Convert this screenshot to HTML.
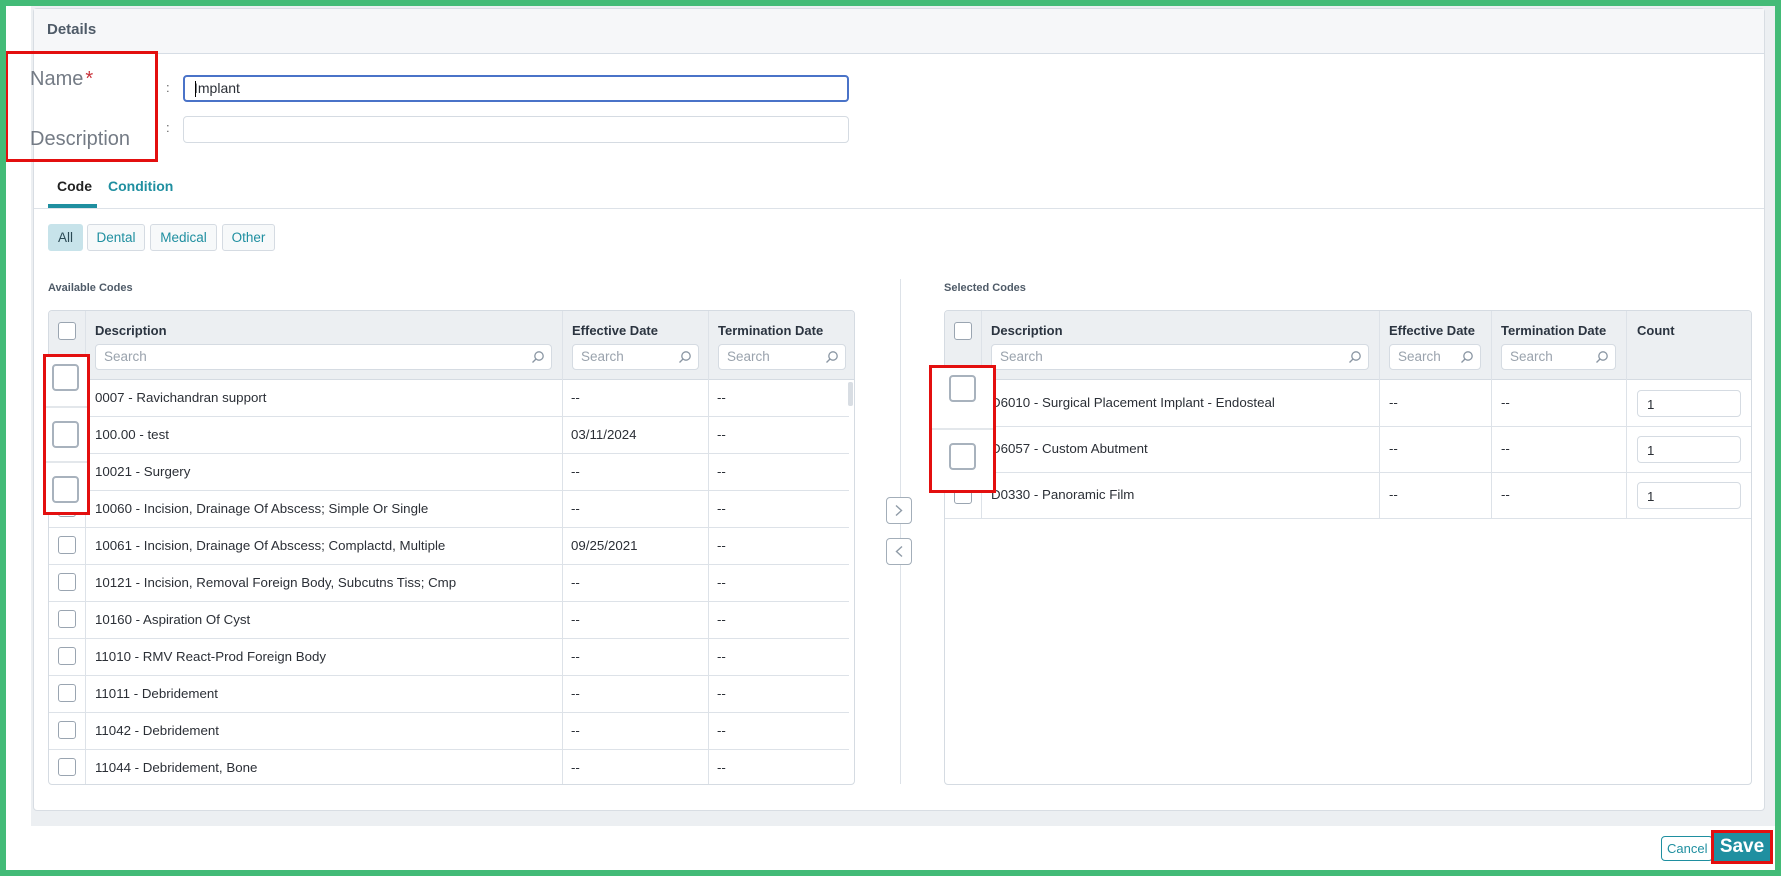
<!DOCTYPE html>
<html><head><meta charset="utf-8">
<style>
*{box-sizing:border-box;margin:0;padding:0}
body{width:1781px;height:876px;position:relative;overflow:hidden;background:#fff;font-family:"Liberation Sans",Arial,sans-serif;color:#2b2f36}
.a{position:absolute}
.frame{left:0;top:0;width:1781px;height:876px;border:6px solid #43bb77}
.gray{left:31px;top:6px;width:1744px;height:820px;background:#eceff2}
.panel{left:33px;top:8px;width:1732px;height:803px;background:#fff;border:1px solid #d8dde3;border-radius:4px}
.hdr{left:34px;top:9px;width:1730px;height:45px;background:#f6f7f9;border-bottom:1px solid #d6dde5}
.lbl{color:#747b85;font-size:20px}
.inp{border:1px solid #d5dbe2;border-radius:4px;background:#fff}
.red{border:3px solid #e30f0f}
.btn{top:224px;height:27px;border:1px solid #d5dbe2;border-radius:3px;background:#f7f9fa;color:#1f8fa0;font-size:13.5px;text-align:center;line-height:25px}
.tbl{border:1px solid #d5dbe2;border-radius:4px;background:#fff;overflow:hidden}
.th{background:#eceff2;font-weight:bold;font-size:13px;color:#2b3440}
.cb{width:18px;height:18px;border:1.5px solid #9aa5b1;border-radius:3px;background:#fff}
.cbb{width:27px;height:27px;border:2px solid #a8b2bd;border-radius:4px;background:#fff}
.srch{height:26px;border:1px solid #d5dbe2;border-radius:4px;background:#fff;color:#9aa3ad;font-size:13.5px;line-height:24px;padding-left:8px}
.srch svg{position:absolute;right:6px;top:5px}
.row{font-size:13.3px;color:#2b2f36}
.vl{background:#dde2e8;width:1px}
.hl{background:#dde2e8;height:1px}
</style></head><body>
<div class="a gray"></div>
<div class="a panel"></div>
<div class="a hdr"></div>
<div class="a" style="left:47px;top:21px;font-size:15px;font-weight:bold;color:#4f5b68">Details</div>

<div class="a lbl" style="left:30px;top:68px">Name<span style="color:#c8323a;font-size:20px;margin-left:2px">*</span></div>
<div class="a lbl" style="left:30px;top:128px">Description</div>
<div class="a red" style="left:5px;top:51px;width:153px;height:111px"></div>
<div class="a" style="left:166px;top:80px;font-size:13px;color:#666">:</div>
<div class="a" style="left:166px;top:120px;font-size:13px;color:#666">:</div>
<div class="a" style="left:183px;top:75px;width:666px;height:27px;border:2px solid #4a73c8;border-radius:4px;font-size:14px;line-height:23px;padding-left:9px">Implant<span class="a" style="left:10px;top:4px;width:1px;height:16px;background:#000"></span></div>
<div class="a inp" style="left:183px;top:116px;width:666px;height:27px"></div>

<div class="a" style="left:57px;top:178px;font-size:14px;font-weight:bold;color:#222">Code</div>
<div class="a" style="left:108px;top:178px;font-size:14px;font-weight:bold;color:#1f8fa0">Condition</div>
<div class="a" style="left:48px;top:204px;width:49px;height:4px;background:#1f8fa0"></div>
<div class="a hl" style="left:34px;top:208px;width:1730px"></div>

<div class="a btn" style="left:48px;width:35px;background:#c7e3ea;border-color:#c7e3ea;color:#2b4a55">All</div>
<div class="a btn" style="left:87px;width:58px">Dental</div>
<div class="a btn" style="left:150px;width:67px">Medical</div>
<div class="a btn" style="left:222px;width:53px">Other</div>

<div class="a" style="left:48px;top:282px;font-size:11px;font-weight:bold;color:#4f5b68">Available Codes</div>
<div class="a" style="left:944px;top:282px;font-size:11px;font-weight:bold;color:#4f5b68">Selected Codes</div>

<!-- left table -->
<div class="a tbl" style="left:48px;top:310px;width:807px;height:475px">
 <div class="a th" style="left:0;top:0;width:807px;height:69px;border-bottom:1px solid #d5dbe2"></div>
 <div class="a vl" style="left:36px;top:0;height:475px"></div>
 <div class="a vl" style="left:513px;top:0;height:475px"></div>
 <div class="a vl" style="left:659px;top:0;height:475px"></div>
 <div class="a cb" style="left:9px;top:11px"></div>
 <div class="a th" style="left:46px;top:12px;background:none">Description</div>
 <div class="a th" style="left:523px;top:12px;background:none">Effective Date</div>
 <div class="a th" style="left:669px;top:12px;background:none">Termination Date</div>
 <div class="a srch" style="left:46px;top:33px;width:457px">Search<svg width="14" height="14" viewBox="0 0 14 14"><circle cx="8" cy="6" r="4.2" fill="none" stroke="#8a96a3" stroke-width="1.3"/><path d="M5 9 L1.5 12.5" stroke="#8a96a3" stroke-width="1.3"/></svg></div>
 <div class="a srch" style="left:523px;top:33px;width:127px">Search<svg width="14" height="14" viewBox="0 0 14 14"><circle cx="8" cy="6" r="4.2" fill="none" stroke="#8a96a3" stroke-width="1.3"/><path d="M5 9 L1.5 12.5" stroke="#8a96a3" stroke-width="1.3"/></svg></div>
 <div class="a srch" style="left:669px;top:33px;width:128px">Search<svg width="14" height="14" viewBox="0 0 14 14"><circle cx="8" cy="6" r="4.2" fill="none" stroke="#8a96a3" stroke-width="1.3"/><path d="M5 9 L1.5 12.5" stroke="#8a96a3" stroke-width="1.3"/></svg></div>
</div>
<div id="lrows"></div>
<div class="a" style="left:848px;top:382px;width:5px;height:24px;background:#d8dde3;border-radius:2px"></div>

<!-- divider and arrows -->
<div class="a vl" style="left:900px;top:279px;height:505px"></div>
<div class="a" style="left:886px;top:497px;width:26px;height:27px;border:1.5px solid #a3aeb9;border-radius:4px;background:#fff"><svg class="a" style="left:7px;top:6px" width="10" height="13"><path d="M2 1.5 L7.5 6.5 L2 11.5" fill="none" stroke="#8f9ba7" stroke-width="1.4"/></svg></div>
<div class="a" style="left:886px;top:538px;width:26px;height:27px;border:1.5px solid #a3aeb9;border-radius:4px;background:#fff"><svg class="a" style="left:7px;top:6px" width="10" height="13"><path d="M8 1.5 L2.5 6.5 L8 11.5" fill="none" stroke="#8f9ba7" stroke-width="1.4"/></svg></div>

<!-- right table -->
<div class="a tbl" style="left:944px;top:310px;width:808px;height:475px">
 <div class="a th" style="left:0;top:0;width:808px;height:69px;border-bottom:1px solid #d5dbe2"></div>
 <div class="a vl" style="left:36px;top:0;height:207px"></div>
 <div class="a vl" style="left:434px;top:0;height:207px"></div>
 <div class="a vl" style="left:546px;top:0;height:207px"></div>
 <div class="a vl" style="left:681px;top:0;height:207px"></div>
 <div class="a cb" style="left:9px;top:11px"></div>
 <div class="a th" style="left:46px;top:12px;background:none">Description</div>
 <div class="a th" style="left:444px;top:12px;background:none">Effective Date</div>
 <div class="a th" style="left:556px;top:12px;background:none">Termination Date</div>
 <div class="a th" style="left:692px;top:12px;background:none">Count</div>
 <div class="a srch" style="left:46px;top:33px;width:378px">Search<svg width="14" height="14" viewBox="0 0 14 14"><circle cx="8" cy="6" r="4.2" fill="none" stroke="#8a96a3" stroke-width="1.3"/><path d="M5 9 L1.5 12.5" stroke="#8a96a3" stroke-width="1.3"/></svg></div>
 <div class="a srch" style="left:444px;top:33px;width:92px">Search<svg width="14" height="14" viewBox="0 0 14 14"><circle cx="8" cy="6" r="4.2" fill="none" stroke="#8a96a3" stroke-width="1.3"/><path d="M5 9 L1.5 12.5" stroke="#8a96a3" stroke-width="1.3"/></svg></div>
 <div class="a srch" style="left:556px;top:33px;width:115px">Search<svg width="14" height="14" viewBox="0 0 14 14"><circle cx="8" cy="6" r="4.2" fill="none" stroke="#8a96a3" stroke-width="1.3"/><path d="M5 9 L1.5 12.5" stroke="#8a96a3" stroke-width="1.3"/></svg></div>

 <div class="a hl" style="left:0;top:115px;width:808px"></div>
 <div class="a hl" style="left:0;top:161px;width:808px"></div>
 <div class="a hl" style="left:0;top:207px;width:808px"></div>
 <div class="a row" style="left:46px;top:84px">D6010 - Surgical Placement Implant - Endosteal</div>
 <div class="a row" style="left:46px;top:130px">D6057 - Custom Abutment</div>
 <div class="a row" style="left:46px;top:176px">D0330 - Panoramic Film</div>
 <div class="a row" style="left:444px;top:84px">--</div><div class="a row" style="left:556px;top:84px">--</div>
 <div class="a row" style="left:444px;top:130px">--</div><div class="a row" style="left:556px;top:130px">--</div>
 <div class="a row" style="left:444px;top:176px">--</div><div class="a row" style="left:556px;top:176px">--</div>
 <div class="a inp row" style="left:692px;top:79px;width:104px;height:27px;padding:6px 0 0 9px">1</div>
 <div class="a inp row" style="left:692px;top:125px;width:104px;height:27px;padding:6px 0 0 9px">1</div>
 <div class="a inp row" style="left:692px;top:171px;width:104px;height:27px;padding:6px 0 0 9px">1</div>
 <div class="a cb" style="left:9px;top:175px"></div>
</div>
<div class="a" style="left:930px;top:366px;width:66px;height:127px;background:#fff"></div>
<div class="a hl" style="left:932px;top:428px;width:62px;height:2px;background:#e3e7eb"></div>
<div class="a cbb" style="left:949px;top:375px"></div>
<div class="a cbb" style="left:949px;top:443px"></div>
<div class="a red" style="left:929px;top:365px;width:67px;height:128px"></div>

<!-- footer buttons -->
<div class="a" style="left:1661px;top:836px;width:52px;height:25px;border:1px solid #1f8fa0;border-radius:4px;color:#1f8fa0;font-size:13px;line-height:23px;padding-left:5px;background:#fff;overflow:hidden;white-space:nowrap">Cancel</div>
<div class="a" style="left:1711px;top:830px;width:62px;height:34px;background:#1f8fa0;color:#fff;font-weight:bold;font-size:19px;line-height:28px;text-align:center;border:3px solid #e30f0f">Save</div>

<div class="a frame"></div>

<script>
var rows=[["0007 - Ravichandran support","--"],["100.00 - test","03/11/2024"],["10021 - Surgery","--"],["10060 - Incision, Drainage Of Abscess; Simple Or Single","--"],["10061 - Incision, Drainage Of Abscess; Complactd, Multiple","09/25/2021"],["10121 - Incision, Removal Foreign Body, Subcutns Tiss; Cmp","--"],["10160 - Aspiration Of Cyst","--"],["11010 - RMV React-Prod Foreign Body","--"],["11011 - Debridement","--"],["11042 - Debridement","--"],["11044 - Debridement, Bone","--"]];
var h="",R=37;
for(var i=0;i<rows.length;i++){
 var t=379+i*R;
 if(i<10) h+='<div class="a hl" style="left:49px;top:'+Math.round(t+R)+'px;width:800px"></div>';
 h+='<div class="a row" style="left:95px;top:'+Math.round(t+11)+'px">'+rows[i][0]+'</div>';
 h+='<div class="a row" style="left:571px;top:'+Math.round(t+11)+'px">'+rows[i][1]+'</div>';
 h+='<div class="a row" style="left:717px;top:'+Math.round(t+11)+'px">--</div>';
 if(i>2) h+='<div class="a cb" style="left:58px;top:'+Math.round(t+9)+'px"></div>';
}
h+='<div class="a" style="left:44px;top:355px;width:45px;height:159px;background:#fff"></div>';
h+='<div class="a hl" style="left:46px;top:406px;width:41px;height:2px;background:#e3e7eb"></div>';
h+='<div class="a hl" style="left:46px;top:461px;width:41px;height:2px;background:#e3e7eb"></div>';
h+='<div class="a cbb" style="left:52px;top:364px"></div><div class="a cbb" style="left:52px;top:421px"></div><div class="a cbb" style="left:52px;top:476px"></div>';
h+='<div class="a red" style="left:43px;top:354px;width:47px;height:161px"></div>';
document.getElementById("lrows").innerHTML=h;
</script>
</body></html>
